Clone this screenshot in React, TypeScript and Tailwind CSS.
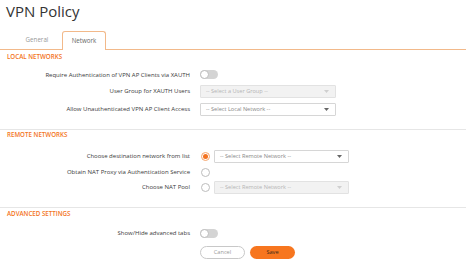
import React from "react";

const Caret = ({ light }: { light?: boolean }) => (
  <svg width="5" height="3" viewBox="0 0 5 3" className="shrink-0">
    <path d="M0 0 L5 0 L2.5 3 Z" fill={light ? "#cfcfcf" : "#666"} />
  </svg>
);

const Select = ({ text, disabled, w }: { text: string; disabled?: boolean; w: string }) => (
  <div
    className={`${w} h-[13px] flex items-center justify-between pl-[5px] pr-[6px] border rounded-[1px] ${
      disabled ? "bg-[#f2f2f2] border-[#e2e2e2] text-[#b5b5b5]" : "bg-white border-[#d6d6d6] text-[#888]"
    } text-[5.6px]`}
  >
    <span>{text}</span>
    <Caret light={disabled} />
  </div>
);

const Toggle = () => (
  <div className="w-[18px] h-[9px] rounded-full bg-[#d4d4d4] relative">
    <div className="absolute left-0 top-0 w-[9px] h-[9px] rounded-full bg-white border border-[#bdbdbd]" />
  </div>
);

const Radio = ({ on }: { on?: boolean }) => (
  <div
    className={`w-[9px] h-[9px] rounded-full border flex items-center justify-center bg-white ${
      on ? "border-[#f6a46a]" : "border-[#bdbdbd]"
    }`}
  >
    {on && <div className="w-[5px] h-[5px] rounded-full bg-[#f37321]" />}
  </div>
);

const Label = ({ children }: { children: React.ReactNode }) => (
  <div className="w-[183px] text-right text-[6px] font-medium text-[#3a3a3a] leading-none whitespace-nowrap">
    {children}
  </div>
);

const Heading = ({ children, h }: { children: React.ReactNode; h: string }) => (
  <div className={`${h} flex items-center pl-[7px] text-[6.2px] font-semibold text-[#f37321] leading-none`}>
    {children}
  </div>
);

export default function App() {
  return (
    <div
      className="w-[474px] h-[272px] bg-white overflow-hidden"
      style={{ fontFamily: '"Open Sans", "Liberation Sans", sans-serif' }}
    >
      <div className="h-[31px] pl-[6px] pt-[1px] text-[15px] leading-[20px] text-[#333]">VPN Policy</div>
      <div className="flex items-end h-[19px] w-[466px] border-b border-[#f2b98a] pl-[12px]">
        <div className="w-[50px] h-[18px] flex items-center justify-center text-[6.2px] text-[#999]">General</div>
        <div className="w-[44px] h-[19px] -mb-px flex items-center justify-center text-[6.2px] text-[#666] bg-white border border-b-0 border-[#f2b98a] rounded-t-[3px]">
          Network
        </div>
      </div>
      <Heading h="h-[15px]">LOCAL NETWORKS</Heading>
      <div className="h-[19px] flex items-center pl-[7px]">
        <Label>Require Authentication of VPN AP Clients via XAUTH</Label>
        <div className="ml-[10px]">
          <Toggle />
        </div>
      </div>
      <div className="h-[14px] flex items-center pl-[7px]">
        <Label>User Group for XAUTH Users</Label>
        <div className="ml-[10px]">
          <Select w="w-[136px]" text="-- Select a User Group --" disabled />
        </div>
      </div>
      <div className="mt-[4px] h-[14px] flex items-center pl-[7px]">
        <Label>Allow Unauthenticated VPN AP Client Access</Label>
        <div className="ml-[10px]">
          <Select w="w-[136px]" text="-- Select Local Network --" />
        </div>
      </div>
      <div className="mt-[13px] h-px w-[466px] bg-[#e6e6e6]" />
      <Heading h="h-[11px]">REMOTE NETWORKS</Heading>
      <div className="mt-[8px] h-[14px] flex items-center pl-[7px]">
        <Label>Choose destination network from list</Label>
        <div className="ml-[11px] flex items-center gap-[4px]">
          <Radio on />
          <Select w="w-[135px]" text="-- Select Remote Network --" />
        </div>
      </div>
      <div className="mt-[2px] h-[14px] flex items-center pl-[7px]">
        <Label>Obtain NAT Proxy via Authentication Service</Label>
        <div className="ml-[11px] flex items-center">
          <Radio />
        </div>
      </div>
      <div className="mt-[1px] h-[14px] flex items-center pl-[7px]">
        <Label>Choose NAT Pool</Label>
        <div className="ml-[11px] flex items-center gap-[4px]">
          <Radio />
          <Select w="w-[135px]" text="-- Select Remote Network --" disabled />
        </div>
      </div>
      <div className="mt-[13px] h-px w-[466px] bg-[#e6e6e6]" />
      <Heading h="h-[13px]">ADVANCED SETTINGS</Heading>
      <div className="mt-[6px] h-[12px] flex items-center pl-[7px]">
        <Label>Show/Hide advanced tabs</Label>
        <div className="ml-[10px]">
          <Toggle />
        </div>
      </div>
      <div className="mt-[7px] flex gap-[5px] pl-[200px]">
        <div className="w-[45px] h-[13px] rounded-full border border-[#c8c8c8] flex items-center justify-center text-[5.6px] text-[#999]">
          Cancel
        </div>
        <div className="w-[45px] h-[13px] rounded-full bg-[#f7761f] flex items-center justify-center text-[5.6px] text-[#3a2a1a] font-medium">
          Save
        </div>
      </div>
    </div>
  );
}
